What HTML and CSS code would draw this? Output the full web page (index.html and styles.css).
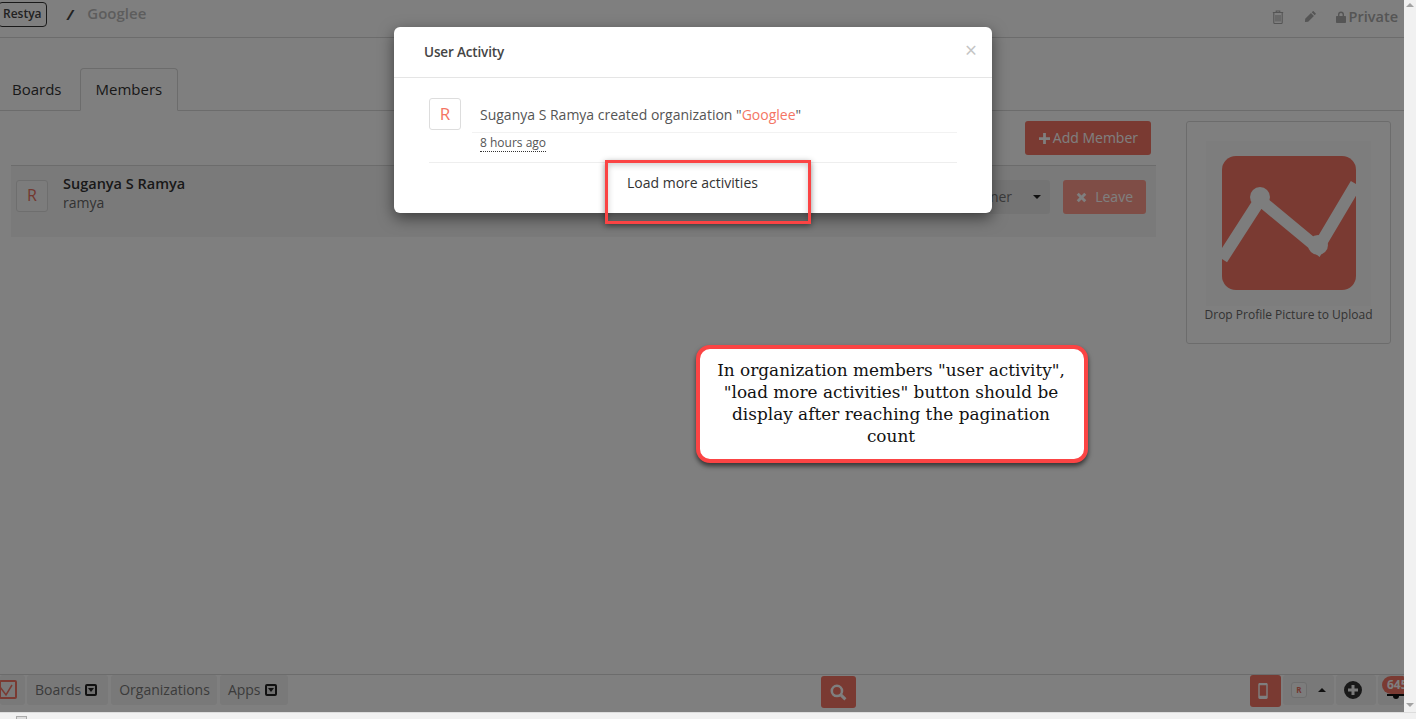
FILE: index.html
```html
<!DOCTYPE html>
<html lang="en">
<head>
<meta charset="utf-8">
<title>Googlee - Members</title>
<link rel="stylesheet" href="styles.css">
</head>
<body>
<div class="window">
  <div class="viewport">
    <div class="page">
      <header class="topbar">
        <span class="logo">Restya</span>
        <span class="slash">/</span>
        <span class="org-name">Googlee</span>
        <div class="top-actions">
          <svg class="icon-trash" viewBox="0 0 12 14" aria-hidden="true"><path d="M4.2 2V1h3.6v1M.8 2.5h10.4M1.800 2.500v10.200c0 .5.3.8.8.8h6.800c.5 0 .8-.3.8-.8V2.500M4 5v6.500M6 5v6.500M8 5v6.500" fill="none" stroke="currentColor" stroke-width="1.100"/></svg>
          <svg class="icon-pencil" viewBox="0 0 14 14" aria-hidden="true"><path d="M10.500 1.500l2 2c.4.4.4.8 0 1.200l-1 1-3.200-3.200 1-1c.4-.4.8-.4 1.200 0zM7.500 3.300l3.200 3.200L4.500 12.700 1 13l.3-3.500z" fill="currentColor"/></svg>
          <span class="private"><svg class="icon-lock" viewBox="0 0 10 12" aria-hidden="true"><path d="M2 5V3.500a3 3 0 0 1 6 0V5h1.200c.3 0 .8.300.8.800v5.400c0 .5-.4.800-.8.800H.8c-.4 0-.8-.3-.8-.8V5.800C0 5.300.5 5 .8 5zM3.400 5h3.200V3.500a1.600 1.600 0 0 0-3.200 0z" fill="currentColor" fill-rule="evenodd"/></svg>Private</span>
        </div>
      </header>

      <nav class="tabs">
        <span class="tab">Boards</span>
        <span class="tab tab-active">Members</span>
      </nav>

      <main class="content">
        <section class="members">
          <div class="members-bar">
            <span class="btn-primary"><svg class="icon-plus" viewBox="0 0 12 12" aria-hidden="true"><path d="M4.500 0h3v4.500H12v3H7.500V12h-3V7.500H0v-3h4.500z" fill="currentColor"/></svg>Add Member</span>
          </div>
          <div class="member-row">
            <span class="avatar">R</span>
            <div class="member-names">
              <div class="member-name">Suganya S Ramya</div>
              <div class="member-user">ramya</div>
            </div>
            <span class="role">Owner<span class="caret"></span></span>
            <span class="btn-leave"><svg class="icon-x" viewBox="0 0 12 12" aria-hidden="true"><path d="M3 .8L6 3.800 9 .8 11.200 3 8.200 6l3 3L9 11.200l-3-3-3 3L.8 9l3-3-3-3z" fill="currentColor"/></svg>Leave</span>
          </div>
        </section>
        <aside class="upload">
          <div class="upload-well">
            <svg class="upload-logo" viewBox="0 0 134 134" aria-hidden="true">
              <rect width="134" height="134" rx="14" fill="#f47564"/>
              <path d="M0 103L38 44 96 92 134 28" fill="none" stroke="#fafafa" stroke-width="12"/>
              <circle cx="38" cy="41" r="10" fill="#fafafa"/>
              <circle cx="96" cy="89" r="10" fill="#fafafa"/>
            </svg>
          </div>
          <div class="upload-text">Drop Profile Picture to Upload</div>
        </aside>
      </main>

      <footer class="dock">
        <span class="dock-brand"><svg class="brand-icon" viewBox="0 0 18 20" aria-hidden="true"><rect x="1" y="1" width="16" height="17" rx="1" fill="none" stroke="currentColor" stroke-width="2"/><path d="M1 7l6 8 6-10" fill="none" stroke="currentColor" stroke-width="1.500"/></svg></span>
        <span class="dock-btn">Boards<span class="square-caret"></span></span>
        <span class="dock-btn">Organizations</span>
        <span class="dock-btn">Apps<span class="square-caret"></span></span>
        <span class="dock-search"><svg class="icon-search" viewBox="0 0 16 16" aria-hidden="true"><circle cx="6.500" cy="6.500" r="4.800" fill="none" stroke="currentColor" stroke-width="2.400"/><path d="M10 10l4.500 4.500" stroke="currentColor" stroke-width="2.800"/></svg></span>
        <span class="dock-phone"><svg class="icon-phone" viewBox="0 0 10 17" aria-hidden="true"><path d="M1.500 0h7C9.400 0 10 .6 10 1.500v14c0 .9-.6 1.500-1.500 1.500h-7C.6 17 0 16.400 0 15.500v-14C0 .6.600 0 1.500 0zM1.500 2.500v11h7v-11z" fill="currentColor" fill-rule="evenodd"/></svg></span>
        <span class="dock-user"><span class="mini-avatar">R</span><span class="caret-up"></span></span>
        <span class="dock-add"><svg class="icon-circle-plus" viewBox="0 0 18 18" aria-hidden="true"><path d="M9 0a9 9 0 1 1 0 18A9 9 0 0 1 9 0zM7.500 4v3.500H4v3h3.500V14h3v-3.500H14v-3h-3.500V4z" fill="currentColor" fill-rule="evenodd"/></svg></span>
        <span class="dock-notify"><span class="badge">645</span><span class="bell"></span></span>
      </footer>
    </div>

    <div class="backdrop"></div>

    <div class="modal">
      <div class="modal-head">
        <span class="modal-title">User Activity</span>
        <span class="modal-close">×</span>
      </div>
      <div class="modal-body">
        <div class="activity">
          <span class="avatar avatar-modal">R</span>
          <div class="activity-main">
            <div class="activity-text">Suganya S Ramya created organization "<span class="link">Googlee</span>"</div>
            <div class="activity-time"><span class="time-label">8 hours ago</span></div>
          </div>
        </div>
        <div class="load-more">Load more activities</div>
      </div>
    </div>

    <div class="mark-box"></div>

    <div class="callout">In organization members "user activity", "load more activities" button should be display after reaching the pagination count</div>
  </div>

  <div class="scrollbar">
    <span class="arrow-up"></span>
    <span class="arrow-down"></span>
  </div>
</div>
<div class="status-strip"><span class="status-box"></span></div>
</body>
</html>
```

FILE: styles.css
```css
* { box-sizing: border-box; }

html, body {
  margin: 0;
  height: 100%;
  overflow: hidden;
  background: #f1f1f1;
  font-family: "Open Sans", "Liberation Sans", sans-serif;
}

.window {
  display: flex;
  height: 712px;
}

.viewport {
  position: relative;
  flex: 1;
  min-width: 0;
  overflow: hidden;
}

.page {
  display: flex;
  flex-direction: column;
  height: 100%;
  background: #fff;
  color: #555;
}

/* top bar */
.topbar {
  display: flex;
  align-items: center;
  height: 38px;
  padding: 0 6px 10px 0;
  border-bottom: 1px solid #d9d9d9;
  flex: none;
}

.logo {
  display: block;
  width: 49px;
  height: 25px;
  margin: 0 0 -2px -2px;
  padding-left: 4px;
  border: 1px solid #333;
  border-radius: 4px;
  font-size: 12px;
  font-weight: 600;
  line-height: 22px;
  color: #444;
}

.slash {
  margin-left: 20px;
  font-size: 15px;
  font-style: italic;
  font-weight: 700;
  color: #444;
}

.org-name {
  margin: -1px 0 0 14px;
  font-size: 15px;
  font-weight: 600;
  color: #bbb;
}

.top-actions {
  display: flex;
  align-items: center;
  margin-left: auto;
  margin-top: 6px;
  color: #aaa;
}

.icon-trash { width: 12px; height: 14px; }
.icon-pencil { width: 13px; height: 13px; margin-left: 20px; }
.icon-lock { width: 10px; height: 12px; margin-right: 3px; }

.private {
  display: flex;
  align-items: center;
  margin-left: 19px;
  font-size: 14.500px;
  font-weight: 600;
}

/* tabs */
.tabs {
  display: flex;
  flex: none;
  height: 73px;
  padding-top: 30px;
  border-bottom: 1px solid #d9d9d9;
}

.tab {
  height: 43px;
  padding: 11px 12px 0;
  font-size: 15px;
  line-height: 20px;
  color: #333;
  margin-right: 6px;
}

.tab-active {
  margin-right: 0;
  padding: 10px 15px 0;
  background: #fff;
  border: 1px solid #d9d9d9;
  border-bottom-color: #fff;
  border-radius: 4px 4px 0 0;
}

/* main content */
.content {
  display: flex;
  flex: 1;
  padding: 10px 13px 0 11px;
}

.members {
  flex: 1;
  min-width: 0;
}

.members-bar {
  display: flex;
  justify-content: flex-end;
  height: 44px;
  padding-right: 5px;
}

.btn-primary {
  display: flex;
  align-items: center;
  height: 34px;
  padding: 0 13px 0 14px;
  border-radius: 3px;
  background: #f47564;
  color: #fff;
  font-size: 14px;
  line-height: 32px;
}

.icon-plus { width: 11px; height: 11px; margin-right: 3px; }

.member-row {
  display: flex;
  align-items: flex-start;
  height: 72px;
  padding: 14px 10px 0 5px;
  background: #f5f5f5;
  border-top: 1px solid #d9d9d9;
}

.avatar {
  display: block;
  flex: none;
  width: 32px;
  height: 32px;
  border: 1px solid #ddd;
  border-radius: 3px;
  background: #f8f8f8;
  color: #e8705e;
  font-size: 16px;
  line-height: 29px;
  text-align: center;
}

.member-names {
  margin-left: 15px;
  margin-top: -6px;
}

.member-name {
  font-size: 14.500px;
  font-weight: 600;
  line-height: 19px;
  color: #333;
}

.member-user {
  font-size: 14px;
  line-height: 19px;
  color: #666;
}

.role {
  display: flex;
  align-items: center;
  margin-left: auto;
  width: 90px;
  height: 34px;
  border-radius: 3px;
  background: #e9e9e9;
  padding-left: 8px;
  font-size: 14px;
  line-height: 32px;
  color: #777;
}

.caret {
  margin-left: auto;
  margin-right: 9px;
  border-top: 4px solid #222;
  border-left: 4px solid transparent;
  border-right: 4px solid transparent;
}

.btn-leave {
  display: flex;
  align-items: center;
  height: 34px;
  margin-left: 13px;
  padding: 0 13px;
  border-radius: 3px;
  background: #ff9b8c;
  color: #fff;
  font-size: 14px;
  line-height: 32px;
}

.icon-x { width: 11px; height: 11px; margin-right: 8px; }

.upload {
  flex: none;
  width: 205px;
  height: 223px;
  margin-left: 30px;
  padding-top: 19px;
  border: 1px solid #d9d9d9;
  border-radius: 3px;
}

.upload-well {
  width: 165px;
  height: 165px;
  margin: 0 auto;
  padding: 15px 0 0 16px;
  background: #fafafa;
}

.upload-logo { display: block; width: 134px; height: 134px; }

.upload-text {
  font-size: 12px;
  text-align: center;
  color: #666;
  white-space: nowrap;
}

/* bottom dock */
.dock {
  display: flex;
  flex: none;
  align-items: flex-start;
  height: 38px;
  border-top: 1px solid #d9d9d9;
  overflow: hidden;
  background: #fff;
}

.dock-brand {
  display: flex;
  align-items: center;
  flex: none;
  width: 25px;
  height: 30px;
  margin-right: 2px;
  border-radius: 3px;
  background: #f2f2f2;
  color: #f47564;
}

.brand-icon { width: 18px; height: 20px; margin-left: -1px; }

.dock-btn {
  display: flex;
  align-items: center;
  height: 30px;
  margin-right: 3px;
  padding: 0 7px 2px 8px;
  border-radius: 3px;
  background: #f2f2f2;
  font-size: 14px;
  color: #777;
}

.square-caret {
  position: relative;
  width: 12px;
  height: 12px;
  margin: 2px 4px 0 4px;
  border: 2px solid #222;
  border-radius: 2px;
  background: #ddd;
}

.square-caret::after {
  content: "";
  position: absolute;
  left: 1px;
  top: 2px;
  border-top: 4px solid #222;
  border-left: 3px solid transparent;
  border-right: 3px solid transparent;
}

.dock-search {
  display: flex;
  align-items: center;
  justify-content: center;
  width: 35px;
  height: 32px;
  margin: 1px 0 0 530px;
  border-radius: 3px;
  background: #f47564;
  color: #fff;
}

.icon-search { width: 17px; height: 17px; }

.dock-phone {
  display: flex;
  align-items: center;
  justify-content: center;
  width: 31px;
  height: 32px;
  margin-left: auto;
  margin-right: 2px;
  padding-right: 5px;
  border-radius: 3px;
  background: #f47564;
  color: #fff;
}

.icon-phone { width: 10px; height: 16px; }

.dock-user {
  display: flex;
  align-items: center;
  width: 51px;
  height: 30px;
  margin-right: 2px;
  padding-left: 8px;
  border-radius: 3px;
  background: #f2f2f2;
}

.mini-avatar {
  width: 16px;
  height: 16px;
  border: 1px solid #ddd;
  border-radius: 3px;
  background: #f8f8f8;
  color: #e8705e;
  font-size: 8px;
  font-weight: 700;
  line-height: 14px;
  text-align: center;
}

.caret-up {
  margin-left: 11px;
  border-bottom: 4px solid #222;
  border-left: 4px solid transparent;
  border-right: 4px solid transparent;
}

.dock-add {
  display: flex;
  align-items: center;
  justify-content: center;
  width: 40px;
  height: 30px;
  margin-right: 2px;
  padding-right: 6px;
  border-radius: 3px;
  background: #f2f2f2;
  color: #333;
}

.icon-circle-plus { width: 18px; height: 18px; }

.dock-notify {
  position: relative;
  display: block;
  width: 26px;
  height: 30px;
  border-radius: 3px;
  background: #f2f2f2;
  overflow: hidden;
}

.badge {
  position: absolute;
  left: 4px;
  top: 1px;
  width: 34px;
  height: 18px;
  border-radius: 9px;
  background: #f47564;
  color: #fff;
  padding-left: 5px;
  font-size: 12px;
  font-weight: 700;
  line-height: 18px;
}

.bell {
  position: absolute;
  left: 9px;
  top: 19px;
  width: 17px;
  height: 7px;
  border-top: 2px solid #111;
}

.bell::after {
  content: "";
  position: absolute;
  left: 6px;
  top: 0;
  width: 6px;
  height: 3px;
  border-radius: 0 0 3px 3px;
  background: #111;
}

/* modal layer */
.backdrop {
  position: absolute;
  inset: 0;
  background: rgba(0, 0, 0, 0.5);
}

.modal {
  position: absolute;
  left: 394px;
  top: 27px;
  width: 598px;
  height: 186px;
  border-radius: 6px;
  background: #fff;
  box-shadow: 0 5px 15px rgba(0, 0, 0, 0.5);
}

.modal-head {
  display: flex;
  align-items: center;
  height: 51px;
  padding: 0 15px 0 30px;
  border-bottom: 1px solid #e5e5e5;
}

.modal-title {
  font-size: 13.500px;
  font-weight: 600;
  letter-spacing: -0.15px;
  color: #444;
}

.modal-close {
  margin-left: auto;
  margin-top: -3px;
  font-size: 21px;
  line-height: 1;
  color: #c4c4c4;
}

.modal-body {
  padding: 20px 35px 0;
}

.activity {
  display: flex;
  align-items: flex-start;
  height: 65px;
  border-bottom: 1px solid #eee;
}

.avatar-modal {
  background: #fff;
  color: #f47564;
  font-size: 17px;
  line-height: 30px;
}

.activity-main {
  flex: 1;
  margin-left: 11px;
}

.activity-text {
  height: 35px;
  padding: 7px 0 0 8px;
  border-bottom: 1px solid #f2f2f2;
  font-size: 14px;
  line-height: 19px;
  color: #555;
}

.link { color: #f47564; }

.activity-time {
  padding: 2px 0 0 8px;
  font-size: 12px;
  line-height: 16px;
  color: #555;
}

.time-label { border-bottom: 1px dotted #333; }

.load-more {
  padding: 10px 0 0 198px;
  font-size: 14px;
  line-height: 19px;
  color: #333;
}

.mark-box {
  position: absolute;
  left: 605px;
  top: 160px;
  width: 206px;
  height: 64px;
  border: 3px solid #fb4444;
  box-shadow: 0 2px 6px rgba(0, 0, 0, 0.45), inset 0 2px 6px rgba(0, 0, 0, 0.2);
}

.callout {
  position: absolute;
  left: 696px;
  top: 345px;
  display: flex;
  align-items: center;
  width: 392px;
  height: 118px;
  padding: 0 16px 2px 14px;
  border: 4px solid #fb4444;
  border-radius: 14px;
  background: #fff;
  box-shadow: 0 3px 5px rgba(0, 0, 0, 0.6);
  font-family: "DejaVu Serif", serif;
  font-size: 16.900px;
  line-height: 22px;
  text-align: center;
  color: #111;
}

/* scrollbar and bottom strip */
.scrollbar {
  position: relative;
  flex: none;
  width: 12px;
  background: #f1f1f1;
}

.arrow-up,
.arrow-down {
  position: absolute;
  left: 2px;
  border-left: 4px solid transparent;
  border-right: 4px solid transparent;
}

.arrow-up { top: 3px; border-bottom: 4px solid #a3a3a3; }
.arrow-down { bottom: 5px; border-top: 4px solid #a3a3a3; }

.status-strip {
  height: 7px;
  padding-left: 16px;
  overflow: hidden;
  background: #f1f1f1;
  border-top: 1px solid #ddd;
}

.status-box {
  display: block;
  width: 11px;
  height: 11px;
  margin-top: 3px;
  border: 1px solid #aaa;
  background: #ddd;
}
```
